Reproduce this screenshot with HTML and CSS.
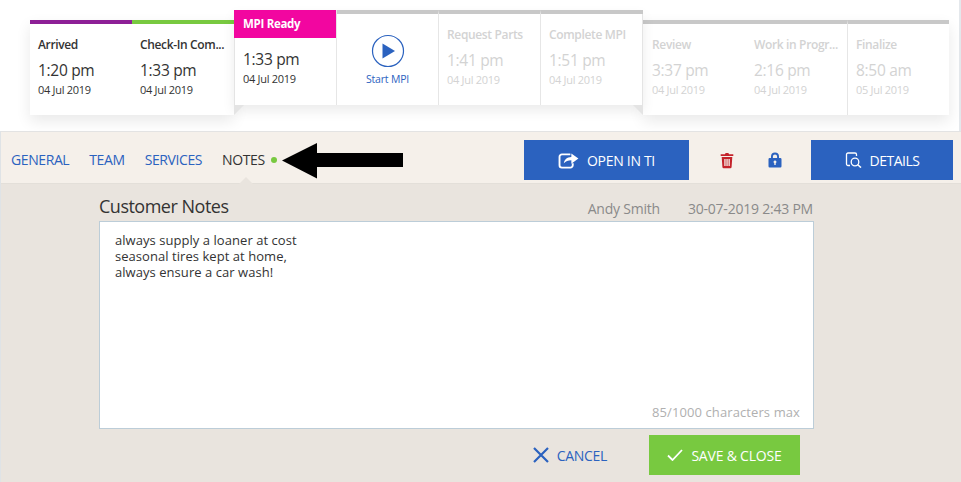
FILE: index.html
```html
<!DOCTYPE html>
<html lang="en">
<head>
<meta charset="utf-8">
<title>Customer Notes</title>
<link rel="stylesheet" href="styles.css">
</head>
<body>
<div class="timeline">
  <section class="group group-low">
    <div class="step bar-purple"><div class="name">Arrived</div><div class="time">1:20 pm</div><div class="date">04 Jul 2019</div></div>
    <div class="step bar-green"><div class="name">Check-In Com...</div><div class="time">1:33 pm</div><div class="date">04 Jul 2019</div></div>
  </section>
  <section class="group group-high">
    <div class="step step-active"><div class="head">MPI Ready</div><div class="time">1:33 pm</div><div class="date">04 Jul 2019</div></div>
    <div class="step bar-grey step-line step-start">
      <svg class="play" viewBox="0 0 34 34" width="34" height="34"><circle cx="17" cy="17" r="15.5" fill="none" stroke="#2b62bf" stroke-width="1.2"/><path d="M11.5 9.5 L24 17 L11.5 24.5 Z" fill="#2b62bf"/></svg>
      <div class="start-label">Start MPI</div>
    </div>
    <div class="step bar-grey step-line muted"><div class="name">Request Parts</div><div class="time">1:41 pm</div><div class="date">04 Jul 2019</div></div>
    <div class="step bar-grey muted"><div class="name">Complete MPI</div><div class="time">1:51 pm</div><div class="date">04 Jul 2019</div></div>
    <i class="fold fold-left"></i>
    <i class="fold fold-right"></i>
  </section>
  <section class="group group-low group-last">
    <div class="step bar-grey muted"><div class="name">Review</div><div class="time">3:37 pm</div><div class="date">04 Jul 2019</div></div>
    <div class="step bar-grey muted"><div class="name">Work in Progr...</div><div class="time">2:16 pm</div><div class="date">04 Jul 2019</div></div>
    <div class="step bar-grey step-line-left muted"><div class="name">Finalize</div><div class="time">8:50 am</div><div class="date">05 Jul 2019</div></div>
  </section>
</div>

<div class="panel">
  <header class="toolbar">
    <nav class="tabs">
      <a class="tab">GENERAL</a>
      <a class="tab">TEAM</a>
      <a class="tab">SERVICES</a>
      <a class="tab tab-current">NOTES<span class="dot"></span></a>
    </nav>
    <svg class="arrow" viewBox="0 0 121 36" width="121" height="36"><path d="M0 17.5 L35 0 L35 10 L121 10 L121 24 L35 24 L35 35.500 Z" fill="#000"/></svg>
    <div class="actions">
      <button class="btn btn-open">
        <svg viewBox="0 0 22 18" width="21" height="17"><path d="M13 2.500H4a2.500 2.500 0 0 0-2.500 2.500v9A2.500 2.500 0 0 0 4 16.500h9a2.500 2.500 0 0 0 2.500-2.500v-2" fill="none" stroke="#fff" stroke-width="2"/><path d="M6 12c.6-4 3.400-6.500 8-6.700V1.500L21.500 7 14 12.500V8.700C10.500 8.700 8 9.800 6 12Z" fill="#fff"/></svg>
        OPEN IN TI
      </button>
      <button class="icon-btn icon-trash">
        <svg viewBox="0 0 14 16" width="14" height="17"><path d="M5 1.800 5.600.6h2.800L9 1.800h4.300v1.800H.7V1.800Z" fill="#c4232b"/><path d="M1.700 4.500h10.600l-.7 10a1.300 1.300 0 0 1-1.300 1.200H3.700a1.300 1.300 0 0 1-1.300-1.200ZM4.300 6.500v7h1.300v-7Zm2.100 0v7h1.300v-7Zm2.100 0v7h1.300v-7Z" fill="#c4232b" fill-rule="evenodd"/></svg>
      </button>
      <button class="icon-btn icon-lock">
        <svg viewBox="0 0 14 16" width="14" height="16"><path d="M7 .5a4 4 0 0 0-4 4V6H1.700A1.200 1.200 0 0 0 .5 7.200v7.100a1.200 1.200 0 0 0 1.200 1.200h10.600a1.200 1.200 0 0 0 1.200-1.200V7.200A1.200 1.200 0 0 0 12.300 6H11V4.500a4 4 0 0 0-4-4Zm0 1.900a2.100 2.100 0 0 1 2.100 2.100V6H4.900V4.500A2.100 2.100 0 0 1 7 2.400Zm0 6a1.500 1.500 0 0 1 .7 2.800v1.900H6.300v-1.900A1.500 1.500 0 0 1 7 8.400Z" fill="#2b62bf" fill-rule="evenodd"/></svg>
      </button>
      <button class="btn btn-details">
        <svg viewBox="0 0 17 16" width="17" height="16"><path d="M5 13.500H3a1.500 1.500 0 0 1-1.500-1.500V2.500A1.500 1.500 0 0 1 3 1h7a1.500 1.500 0 0 1 1.500 1.500V4" fill="none" stroke="#fff" stroke-width="1.300"/><circle cx="10" cy="10" r="3.800" fill="none" stroke="#fff" stroke-width="1.300"/><path d="M12.800 12.800 16 15.600" stroke="#fff" stroke-width="1.500"/></svg>
        DETAILS
      </button>
    </div>
  </header>
  <main class="notes">
    <div class="notes-head">
      <h1>Customer Notes</h1>
      <div class="meta"><span>Andy Smith</span><span>30-07-2019 2:43 PM</span></div>
    </div>
    <div class="note-box">
      <p>always supply a loaner at cost<br>seasonal tires kept at home,<br>always ensure a car wash!</p>
      <div class="count">85/1000 characters max</div>
    </div>
    <div class="form-actions">
      <button class="cancel">
        <svg viewBox="0 0 16 16" width="16" height="16"><path d="M1 1 15 15M15 1 1 15" stroke="#2b62bf" stroke-width="2.200" fill="none"/></svg>
        CANCEL
      </button>
      <button class="save">
        <svg viewBox="0 0 16 12" width="16" height="12"><path d="M1 6.500 5.500 11 15 1" stroke="#fff" stroke-width="1.800" fill="none"/></svg>
        SAVE &amp; CLOSE
      </button>
    </div>
  </main>
</div>
</body>
</html>
```
FILE: styles.css
```css
* { box-sizing: border-box; }
html, body { margin: 0; padding: 0; }
body {
  width: 961px;
  height: 482px;
  overflow: hidden;
  background: #fff;
  font-family: "Open Sans", "Noto Sans", sans-serif;
  color: #333;
}
button { font-family: inherit; border: 0; cursor: pointer; }

.timeline {
  display: flex;
  align-items: flex-start;
  height: 131px;
  padding: 10px 0 0 30px;
  border-right: 2px solid #e4e8ec;
}
.group {
  position: relative;
  display: flex;
  background: #fff;
  height: 95px;
}
.group-low { margin-top: 10px; box-shadow: 0 6px 14px rgba(0, 0, 0, .09); }
.group-high {
  z-index: 2;
  box-shadow: inset 1px 0 #e4e4e4, inset -1px 0 #e4e4e4, 0 6px 12px rgba(0, 0, 0, .08);
}
.step {
  width: 102px;
  padding: 13px 0 0 8px;
  border-top: 4px solid #c8c8c8;
}
.group-last .step { padding-left: 9px; }
.group-last .step-line-left { padding-left: 8px; }
.bar-purple { border-top-color: #8d1f96; }
.bar-green { border-top-color: #78c940; }
.step-line { border-right: 1px solid #e6e6e6; }
.step-line-left { border-left: 1px solid #e6e6e6; }
.name {
  font-size: 12px;
  line-height: 15px;
  font-weight: 600;
  letter-spacing: -.35px;
  white-space: nowrap;
}
.time {
  margin-top: 8px;
  font-size: 15.500px;
  line-height: 20px;
  letter-spacing: -.3px;
}
.date {
  font-size: 11px;
  line-height: 13px;
  margin-top: 3px;
  letter-spacing: -.3px;
}
.muted { color: #d3d3d3; }
.step-active { width: 103px; border-top: 0; padding: 0; border-right: 1px solid #e6e6e6; }
.step-active .time, .step-active .date { padding-left: 9px; }
.step-active .time { margin-top: 11px; }
.head {
  height: 28px;
  background: #f206a0;
  color: #fff;
  font-size: 11.500px;
  font-weight: 700;
  line-height: 28px;
  padding-left: 9px;
  letter-spacing: -.3px;
}
.step-start { padding: 0; text-align: center; }
.play { display: block; margin: 20px auto 0; }
.start-label { margin-top: 4px; font-size: 10.500px; line-height: 14px; color: #2b62bf; letter-spacing: -.2px; }
.fold {
  position: absolute;
  top: 95px;
  width: 0;
  height: 0;
  border-top: 10px solid #e4e4e4;
}
.fold-left { left: 0; border-left: 0; border-right: 10px solid transparent; }
.fold-right { right: 0; border-right: 0; border-left: 10px solid transparent; }

.panel {
  height: 351px;
  background: #e9e4de;
  border-left: 1px solid #dfe3e6;
}
.toolbar {
  position: relative;
  display: flex;
  align-items: center;
  justify-content: space-between;
  height: 53px;
  padding: 5px 8px 0 10px;
  background: #f5f0ea;
  border-top: 1px solid #e3e3e3;
  border-bottom: 1px solid #e3dfd9;
}
.toolbar::after {
  content: "";
  position: absolute;
  left: 238px;
  bottom: -1px;
  border: 7px solid transparent;
  border-top: 0;
  border-bottom-color: #e9e4de;
}
.tabs { display: flex; gap: 20px; }
.tab {
  font-size: 14px;
  line-height: 18px;
  color: #2b62bf;
  letter-spacing: -.4px;
}
.tab-current { color: #333; display: flex; align-items: center; }
.dot { width: 6px; height: 6px; margin-left: 6px; border-radius: 50%; background: #78c940; }
.arrow { position: absolute; left: 281px; top: 11px; }
.actions { display: flex; align-items: center; }
.btn {
  display: flex;
  align-items: center;
  justify-content: center;
  gap: 8px;
  height: 40px;
  background: #2b62bf;
  color: #fff;
  font-size: 14px;
  letter-spacing: -.3px;
}
.btn-open { width: 165px; }
.btn-details { width: 142px; gap: 8px; letter-spacing: -.5px; }
.icon-btn {
  display: flex;
  align-items: center;
  justify-content: center;
  width: 48px;
  height: 40px;
  padding: 0;
  background: none;
}
.icon-trash { margin-left: 14px; }
.icon-lock { margin-right: 12px; }

.notes { padding: 0 147px 0 98px; }
.notes-head {
  display: flex;
  align-items: flex-end;
  justify-content: space-between;
  height: 37px;
  padding: 0 1px 3px 0;
}
.notes-head h1 {
  margin: 0;
  font-size: 18px;
  line-height: 24px;
  font-weight: 400;
  color: #333;
  letter-spacing: -.5px;
}
.meta {
  display: flex;
  gap: 28px;
  font-size: 14px;
  line-height: 18px;
  color: #8a8a8a;
  letter-spacing: -.22px;
}
.note-box {
  display: flex;
  flex-direction: column;
  justify-content: space-between;
  height: 208px;
  padding: 10px 13px 8px 15px;
  background: #fff;
  border: 1px solid #bccdd8;
}
.note-box p {
  margin: 0;
  font-size: 13px;
  line-height: 16px;
  color: #333;
  letter-spacing: .05px;
}
.count {
  align-self: flex-end;
  font-size: 13px;
  line-height: 16px;
  color: #b0b0b0;
  letter-spacing: .1px;
}
.form-actions {
  display: flex;
  justify-content: flex-end;
  align-items: center;
  gap: 42px;
  margin-top: 6px;
  padding-right: 14px;
}
.cancel {
  display: flex;
  align-items: center;
  gap: 8px;
  padding: 0;
  background: none;
  color: #2b62bf;
  font-size: 14px;
  letter-spacing: -.3px;
}
.save {
  display: flex;
  align-items: center;
  justify-content: center;
  gap: 8px;
  width: 151px;
  height: 40px;
  background: #78c940;
  color: #fff;
  font-size: 14px;
  letter-spacing: -.2px;
}
```
